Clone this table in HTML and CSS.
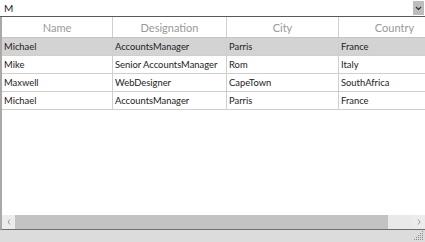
FILE: index.html
```html
<!DOCTYPE html>
<html>
<head>
<meta charset="utf-8">
<link rel="stylesheet" href="styles.css">
</head>
<body>
<div class="app">
  <div class="combo">
    <span class="combo-text">M</span>
    <span class="combo-btn">
      <svg width="7" height="5" viewBox="0 0 7 5"><path d="M1 1 L3.5 3.5 L6 1" fill="none" stroke="#333" stroke-width="1.2"/></svg>
    </span>
  </div>
  <div class="grid">
    <div class="table">
      <div class="row head">
        <div class="cell">Name</div>
        <div class="cell">Designation</div>
        <div class="cell">City</div>
        <div class="cell">Country</div>
      </div>
      <div class="row sel">
        <div class="cell">Michael</div>
        <div class="cell">AccountsManager</div>
        <div class="cell">Parris</div>
        <div class="cell">France</div>
      </div>
      <div class="row">
        <div class="cell">Mike</div>
        <div class="cell">Senior AccountsManager</div>
        <div class="cell">Rom</div>
        <div class="cell">Italy</div>
      </div>
      <div class="row">
        <div class="cell">Maxwell</div>
        <div class="cell">WebDesigner</div>
        <div class="cell">CapeTown</div>
        <div class="cell">SouthAfrica</div>
      </div>
      <div class="row">
        <div class="cell">Michael</div>
        <div class="cell">AccountsManager</div>
        <div class="cell">Parris</div>
        <div class="cell">France</div>
      </div>
    </div>
    <div class="hscroll">
      <div class="sbtn">
        <svg width="4" height="6" viewBox="0 0 4 6"><path d="M3 0.5 L1 3 L3 5.5" fill="none" stroke="#999" stroke-width="1"/></svg>
      </div>
      <div class="thumb"></div>
      <div class="track"></div>
      <div class="sbtn">
        <svg width="4" height="6" viewBox="0 0 4 6"><path d="M1 0.5 L3 3 L1 5.5" fill="none" stroke="#999" stroke-width="1"/></svg>
      </div>
    </div>
  </div>
  <div class="status">
    <svg class="grip" width="10" height="10" viewBox="0 0 10 10">
      <g fill="#8a8a8a">
        <rect x="8" y="0" width="1" height="1"/>
        <rect x="6" y="2" width="1" height="1"/><rect x="8" y="2" width="1" height="1"/>
        <rect x="4" y="4" width="1" height="1"/><rect x="6" y="4" width="1" height="1"/><rect x="8" y="4" width="1" height="1"/>
        <rect x="2" y="6" width="1" height="1"/><rect x="4" y="6" width="1" height="1"/><rect x="6" y="6" width="1" height="1"/><rect x="8" y="6" width="1" height="1"/>
        <rect x="0" y="8" width="1" height="1"/><rect x="2" y="8" width="1" height="1"/><rect x="4" y="8" width="1" height="1"/><rect x="6" y="8" width="1" height="1"/><rect x="8" y="8" width="1" height="1"/>
      </g>
    </svg>
  </div>
</div>
</body>
</html>
```
FILE: styles.css
```css
html, body {
  margin: 0;
  padding: 0;
  background: #ffffff;
}
body {
  font-family: Lato, "Noto Sans", "Liberation Sans", sans-serif;
  font-size: 9.4px;
  color: #222;
}
.app {
  width: 425px;
  height: 242px;
  display: flex;
  flex-direction: column;
  overflow: hidden;
}
.combo {
  height: 17px;
  border-bottom: 1px solid #5a5a5a;
  display: flex;
  align-items: center;
  justify-content: space-between;
  box-sizing: border-box;
  flex: none;
}
.combo-text {
  padding-left: 4px;
  font-size: 10px;
  color: #222;
}
.combo-btn {
  width: 11px;
  height: 14px;
  background: #bdbdbd;
  display: flex;
  align-items: center;
  justify-content: center;
  margin-right: 1px;
}
.grid {
  flex: 1;
  display: flex;
  flex-direction: column;
  border-left: 2px solid #a9a9a9;
  border-bottom: 1px solid #6e6e6e;
  min-height: 0;
}
.table {
  flex: 1;
  overflow: hidden;
}
.row {
  display: grid;
  grid-template-columns: 111px 114px 112px 112px;
  height: 18px;
  border-bottom: 1px solid #cfcfcf;
  box-sizing: border-box;
}
.row .cell {
  border-right: 1px solid #cfcfcf;
  padding-left: 2px;
  display: flex;
  align-items: center;
  white-space: nowrap;
  overflow: hidden;
}
.head {
  height: 21px;
  border-bottom: 1px solid #c4c4c4;
}
.head .cell {
  justify-content: center;
  padding-left: 0;
  color: #999999;
  font-size: 11px;
}
.sel {
  background: #d3d3d3;
}
.hscroll {
  height: 14px;
  display: flex;
  flex: none;
  background: #e9e9e9;
}
.sbtn {
  width: 13px;
  display: flex;
  align-items: center;
  justify-content: center;
  background: #ececec;
}
.thumb {
  width: 373px;
  background: #c3c3c3;
}
.track {
  flex: 1;
  background: #e9e9e9;
}
.status {
  height: 12px;
  flex: none;
  background: #dcdcdc;
  display: flex;
  justify-content: flex-end;
  align-items: flex-end;
}
.grip {
  margin-right: 1px;
  margin-bottom: 1px;
}
```
